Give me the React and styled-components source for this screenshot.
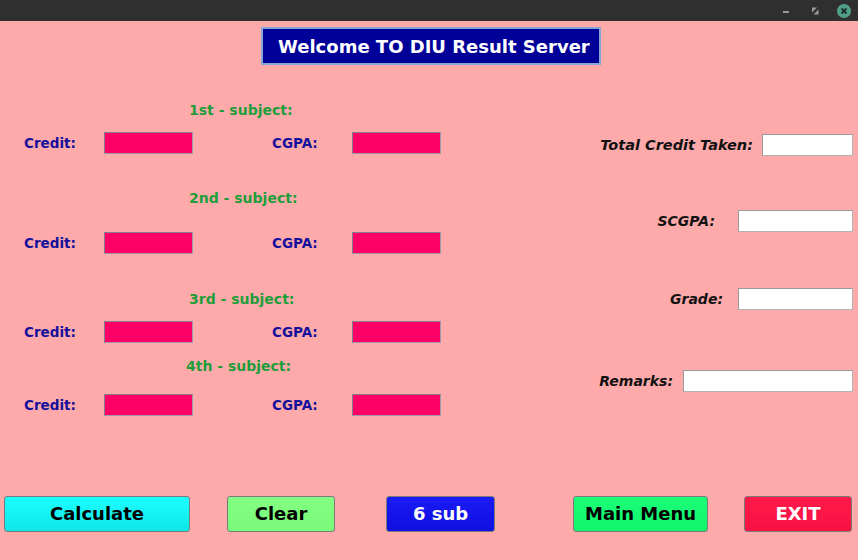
import React from "react";
import styled, { createGlobalStyle } from "styled-components";

const Global = createGlobalStyle`
  html, body { margin: 0; padding: 0; }
  body { background: #ffaaaa; font-family: "DejaVu Sans", "Liberation Sans", sans-serif; }
`;

const Window = styled.div`
  width: 858px;
  height: 560px;
  display: flex;
  flex-direction: column;
  background: #ffaaaa;
  overflow: hidden;
`;

const TitleBar = styled.div`
  height: 21px;
  background: #2f2f2f;
  display: flex;
  align-items: center;
  justify-content: flex-end;
  padding-right: 7px;
  gap: 17px;
  flex-shrink: 0;
`;

const WinButton = styled.svg`
  display: block;
`;

const HeaderWrap = styled.div`
  display: flex;
  justify-content: center;
  padding: 6px 0 0 4px;
`;

const Header = styled.div`
  box-sizing: border-box;
  height: 38px;
  width: 340px;
  border: 2px solid #86a6d6;
  background: #000099;
  color: #ffffff;
  font-weight: bold;
  font-size: 18px;
  display: flex;
  align-items: center;
  padding: 0 4px 0 15px;
  white-space: nowrap;
`;

const Content = styled.div`
  display: flex;
`;

const LeftCol = styled.div`
  width: 460px;
  display: flex;
  flex-direction: column;
`;

const SubjectBlock = styled.div`
  display: flex;
  flex-direction: column;
  margin-top: ${(p) => p.$top}px;
  gap: ${(p) => p.$gap}px;
`;

const SubjectTitle = styled.div`
  height: 20px;
  line-height: 20px;
  font-size: 14px;
  font-weight: bold;
  color: #1d9e3b;
  padding-left: ${(p) => p.$indent}px;
  white-space: nowrap;
`;

const Row = styled.div`
  display: flex;
  align-items: center;
  padding-left: 24px;
  gap: 79px;
`;

const Field = styled.div`
  display: flex;
  align-items: center;
`;

const FieldLabel = styled.span`
  width: 80px;
  font-size: 13.5px;
  font-weight: bold;
  color: #15109c;
  white-space: nowrap;
`;

const PinkInput = styled.div`
  box-sizing: border-box;
  width: 89px;
  height: 22px;
  background: #ff0066;
  border: 1px solid #9a9aa8;
  border-top-color: #808088;
  border-left-color: #808088;
`;

const RightCol = styled.div`
  flex: 1;
  display: flex;
  flex-direction: column;
  padding-right: 5px;
`;

const ResultRow = styled.div`
  display: flex;
  justify-content: flex-end;
  align-items: center;
  margin-top: ${(p) => p.$top}px;
`;

const ResultLabel = styled.span`
  font-size: ${(p) => p.$size}px;
  font-weight: bold;
  font-style: italic;
  color: #111111;
  margin-right: ${(p) => p.$gap}px;
  white-space: nowrap;
`;

const WhiteInput = styled.div`
  box-sizing: border-box;
  width: ${(p) => p.$w}px;
  height: 22px;
  background: #ffffff;
  border: 1px solid #b4b4b4;
  border-top-color: #9a9a9a;
  border-left-color: #9a9a9a;
`;

const Footer = styled.div`
  margin-top: auto;
  padding: 0 0 28px 4px;
  display: flex;
`;

const Btn = styled.button`
  box-sizing: border-box;
  width: ${(p) => p.$w}px;
  height: 36px;
  margin-left: ${(p) => p.$ml}px;
  border: 1px solid #7a7a7a;
  border-radius: 3px;
  background: linear-gradient(${(p) => p.$c1}, ${(p) => p.$c2});
  color: ${(p) => p.$fg};
  font-family: "DejaVu Sans", "Liberation Sans", sans-serif;
  font-weight: bold;
  font-size: 18px;
  padding: 0 0 2px 0;
  display: flex;
  align-items: center;
  justify-content: center;
`;

const subjects = [
  { title: "1st - subject:", top: 35, gap: 12, indent: 189 },
  { title: "2nd - subject:", top: 34, gap: 24, indent: 189 },
  { title: "3rd - subject:", top: 35, gap: 12, indent: 189 },
  { title: "4th - subject:", top: 13, gap: 18, indent: 186 },
];

const results = [
  { label: "Total Credit Taken:", top: 69, gap: 9, w: 91, size: 14.5 },
  { label: "SCGPA:", top: 54, gap: 23, w: 115, size: 14 },
  { label: "Grade:", top: 56, gap: 15, w: 115, size: 14 },
  { label: "Remarks:", top: 60, gap: 10, w: 170, size: 14 },
];

const buttons = [
  { text: "Calculate", w: 186, ml: 0, c1: "#1cffff", c2: "#0fe6e6", fg: "#000" },
  { text: "Clear", w: 108, ml: 37, c1: "#82ff82", c2: "#7afa7a", fg: "#000" },
  { text: "6 sub", w: 109, ml: 51, c1: "#1a1af5", c2: "#1010e0", fg: "#fff" },
  { text: "Main Menu", w: 135, ml: 78, c1: "#1aff78", c2: "#12f56c", fg: "#000" },
  { text: "EXIT", w: 108, ml: 36, c1: "#ff1a4a", c2: "#f51242", fg: "#fff" },
];

export default function App() {
  return (
    <>
      <Global />
      <Window>
        <TitleBar>
          <WinButton width="10" height="10" viewBox="0 0 10 10">
            <rect x="0" y="5" width="6" height="2" fill="#9a9a9a" />
          </WinButton>
          <WinButton width="10" height="10" viewBox="0 0 10 10">
            <path d="M2 1.5 H7 L2 6.5 Z" fill="#9a9a9a" />
            <path d="M8.5 3.5 V8.5 H3.5 Z" fill="#9a9a9a" />
          </WinButton>
          <WinButton width="14" height="14" viewBox="0 0 14 14">
            <circle cx="7" cy="7" r="7" fill="#4f9f89" />
            <path d="M4.5 4.5 L9.5 9.5 M9.5 4.5 L4.5 9.5" stroke="#1f2f2a" strokeWidth="1.8" />
          </WinButton>
        </TitleBar>
        <HeaderWrap>
          <Header>Welcome TO DIU Result Server</Header>
        </HeaderWrap>
        <Content>
          <LeftCol>
            {subjects.map((s) => (
              <SubjectBlock key={s.title} $top={s.top} $gap={s.gap}>
                <SubjectTitle $indent={s.indent}>{s.title}</SubjectTitle>
                <Row>
                  <Field>
                    <FieldLabel>Credit:</FieldLabel>
                    <PinkInput />
                  </Field>
                  <Field>
                    <FieldLabel>CGPA:</FieldLabel>
                    <PinkInput />
                  </Field>
                </Row>
              </SubjectBlock>
            ))}
          </LeftCol>
          <RightCol>
            {results.map((r) => (
              <ResultRow key={r.label} $top={r.top}>
                <ResultLabel $gap={r.gap} $size={r.size}>{r.label}</ResultLabel>
                <WhiteInput $w={r.w} />
              </ResultRow>
            ))}
          </RightCol>
        </Content>
        <Footer>
          {buttons.map((b) => (
            <Btn key={b.text} $w={b.w} $ml={b.ml} $c1={b.c1} $c2={b.c2} $fg={b.fg}>
              {b.text}
            </Btn>
          ))}
        </Footer>
      </Window>
    </>
  );
}
